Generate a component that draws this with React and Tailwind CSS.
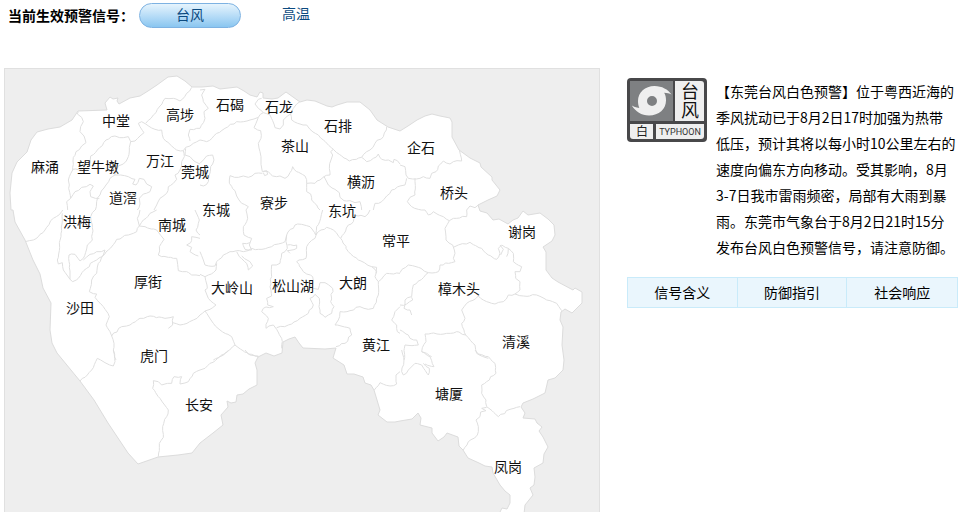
import React from "react";

const OUTLINE =
  "M11 210 L10 193 12 173 17 162 27 152 31 140 37 132 48 129 60 127 72 120 78 111 107 110 105 103 110 97 113 99 118 98 117 101 119 104 130 98 140 96 148 91 157 85 168 77 177 76 185 81 192 87 202 87 213 86 220 89 237 87 244 91 250 95 257 97 260 92 263 93 263 98 272 99 278 98 286 92 293 97 300 102 307 100 315 101 327 106 332 107 337 105 347 102 360 102 370 110 377 120 388 127 400 131 408 126 417 120 425 116 432 114 440 116 450 118 452 122 452 137 459 150 470 158 480 163 481 167 492 177 492 180 500 190 497 196 488 200 478 205 480 211 487 213 493 220 499 219 508 224 513 220 518 218 523 211 528 215 540 213 548 219 554 225 555 235 552 241 543 247 546 252 546 270 552 278 558 282 573 290 575 288 582 292 582 303 572 313 565 309 561 312 560 320 563 327 562 345 564 360 563 370 555 378 548 380 545 393 533 399 523 403 521 407 525 413 523 418 535 419 537 423 542 427 539 431 543 437 548 447 544 454 543 463 534 468 535 477 534 485 530 488 533 495 525 505 524 514 L499 514 502 508 507 509 510 503 510 495 505 491 500 485 493 473 492 467 485 466 479 463 468 458 463 450 459 446 458 437 447 433 444 437 438 441 432 433 432 428 420 425 421 418 418 413 412 419 400 421 395 422 387 422 378 415 380 410 374 390 371 385 365 383 363 377 354 374 347 374 344 365 333 358 336 348 325 349 303 348 299 343 295 337 289 339 283 342 282 353 274 356 266 353 258 357 255 363 257 370 257 385 249 389 243 394 237 395 236 402 231 403 227 401 228 407 221 415 223 425 213 433 200 443 192 453 178 455 158 457 138 464 128 453 108 423 94 400 80 381 57 353 52 343 50 330 51 303 43 288 40 274 33 260 25 240 15 222 13 210 Z";

// District borders, surveyed in sheets: each sheet has its own origin and is drawn at three times map scale.
const SHEETS = [
  {
    x: 0,
    y: 60,
    lines: [
      "235,155 232,162 245,172 250,185 242,200 240,215 252,228 258,248 245,258 228,275 220,292 218,330 208,350 206,385 212,415",
      "218,328 245,328",
      "212,415 225,395 245,382 270,373 280,378 270,395 272,410 298,415",
      "270,310 272,288 300,262 318,240 345,228 370,233 385,230 392,245 388,262 385,290 370,312 355,318 345,345 330,355 318,375 300,405 290,425 286,450",
      "392,245 405,243 420,228 432,218 420,200 415,190 425,185 437,192 465,208 485,210 490,235 530,270 550,272 557,262 580,250 600,240",
      "437,190 460,165 480,138 495,115 520,115 540,123 560,100 575,82",
      "600,205 570,208 565,225 570,243",
      "550,272 553,290 545,305 540,330 525,345 530,358 520,370 505,380 500,400 480,415 470,435 462,450",
      "345,345 362,345 385,350 405,358 398,372 408,375 418,355 432,358 440,372 455,380 450,395 430,402 418,415 420,432 412,450",
      "557,265 555,285 570,290 585,305 600,312",
      "212,415 200,425 203,450",
    ],
  },
  {
    x: 200,
    y: 60,
    lines: [
      "0,90 15,88 5,105 10,125 25,145 12,155 15,175 0,205",
      "0,240 20,245 50,220 75,205 110,185 150,180 175,172 190,158 175,145 165,132 175,118 185,115",
      "190,158 210,165 218,182 225,203 240,207 250,195 250,180 262,168 272,162 280,145 290,132 300,125",
      "272,162 275,180 300,192 320,195 330,208 355,225 370,240 400,268 425,288 448,303 485,292 510,270 525,250 550,230 560,200",
      "175,172 168,190 162,203 182,212 183,235 175,250 180,275 183,300 187,335 205,335 218,348 240,348 255,355 270,338 278,320 290,335 315,348 320,370 345,370 360,360 372,350 390,345 388,325 393,300 398,285 392,275 400,268",
      "187,340 165,340 145,352 130,348 115,352 90,347 88,370 105,392 110,408 125,430 145,440 138,450",
      "190,335 200,332 203,343 194,347 190,338",
      "320,370 320,395 332,402 335,420 350,435 360,450",
      "372,350 385,375 405,388 418,398 420,412 432,422 450,422 465,428 480,425 485,450",
      "485,292 500,305 520,295 535,282 545,298 565,300 580,308 582,298 592,302 600,312",
      "600,378 575,390 560,408 545,425 525,430 520,450",
      "0,310 10,300 20,288 38,285 42,300 32,320 28,345 25,365 10,378 0,375",
    ],
  },
  {
    x: 400,
    y: 60,
    lines: [
      "0,315 15,320 18,345 25,355 60,355 70,350 90,355 95,340 108,335 115,318 130,303 150,312 160,305 185,303 178,270",
      "0,378 15,375 20,355",
      "45,355 45,405 30,412 22,425 35,440 55,448 75,450",
      "200,450 210,438 225,443 235,435",
    ],
  },
  {
    x: 0,
    y: 210,
    lines: [
      "75,95 100,90 135,60 160,25 185,5 188,0",
      "187,10 183,80 172,150 175,162 187,158 190,180 210,208 218,215 235,205 260,175 280,155 305,140 325,120 350,88 385,75 410,65 418,48 435,50 470,60 492,88 478,110 475,135 485,140 530,145 535,182 560,185 575,195 600,197",
      "210,208 207,135 225,133 240,153 250,145 262,105 277,90 277,45 272,20 285,0",
      "418,48 412,25 420,0",
      "418,48 430,30 450,10 470,0",
      "250,150 270,133 290,125 315,120 310,135 295,160 290,190 275,210 268,245 290,252 285,262 310,290 328,320 318,345 330,365 335,378 365,350 390,345 420,325 450,318 495,325 520,320 518,345 505,355",
      "518,338 540,345 580,330 600,315",
      "335,378 342,400 340,420 348,450",
      "585,0 598,30 595,40 588,60 600,75",
      "600,85 575,80 572,98 560,105 575,112 570,125 595,138",
    ],
  },
  {
    x: 200,
    y: 210,
    lines: [
      "138,0 143,25 130,50 132,75 155,85 148,105 155,120 135,118 128,100 150,98",
      "0,125 10,150 15,165 45,168 50,155 70,135 90,125 110,122 130,125 155,115 175,118 215,110 255,95 260,75 285,45 305,43 330,50 347,75 355,65 380,52 400,60 422,85 445,125 475,150 515,170 530,185 525,200 535,215 560,190 600,190",
      "110,125 118,140 140,160 145,180 158,168 150,155 125,138",
      "50,160 48,180 25,195 15,200 0,193",
      "15,200 22,235 15,240 25,265 48,285 30,298 15,303 0,315",
      "15,303 40,340 60,360 95,380 105,405 150,435 175,440",
      "105,405 80,425 40,450",
      "260,75 258,95 262,115 255,125 245,130 240,160 215,165 215,200 210,230 215,258 200,265 203,285 220,290 190,295 185,305 205,325 198,355 220,345 230,358 245,385 245,415",
      "262,105 290,105 290,115 262,122 270,130",
      "230,353 265,345 300,325 325,310 340,285 330,265 345,253 358,265 360,310 375,322 395,310 402,290 392,275 398,235 375,218 360,218 355,238 338,235 338,200 310,185 290,155 318,145 320,110 345,85 350,70",
      "347,75 350,50 362,25 368,0",
      "422,85 445,45 460,35 465,15 495,20 510,0",
      "535,215 535,255 520,295 505,298 480,290 450,302 420,305 415,330 405,345 450,355 455,375 435,400 408,410",
      "600,290 585,305 575,330 590,345 592,365 600,370",
      "515,170 530,172 528,190",
    ],
  },
  {
    x: 400,
    y: 210,
    lines: [
      "75,0 85,15 100,5 130,20 148,32 160,25 200,20 200,0",
      "148,32 135,55 138,90 158,105 165,130 160,145 165,155 120,165 115,185 85,188 55,172 25,165 0,188",
      "85,188 40,225 35,260 15,270 12,295 30,300 35,315",
      "35,262 38,270 20,282 0,285",
      "160,112 175,105 210,97 245,115 265,135 290,148 300,130 295,115 305,105 325,115 320,140",
      "300,105 310,118 302,135",
      "325,115 340,130 340,155 365,170 360,185 345,185 347,205 360,215 360,240 345,252",
      "200,280 235,258 250,270 285,282 310,275 325,255 345,252 370,258 410,255 440,270 470,280 485,302",
      "200,280 185,300 195,325 185,340 197,375 170,365 140,370 75,372 78,395 65,425 80,430 95,440",
      "197,375 225,405 230,430 265,445",
      "0,360 25,375 30,385 50,390 55,405 15,405 12,450",
    ],
  },
  {
    x: 0,
    y: 350,
    lines: [
      "240,93 275,60 292,25 315,38 340,48 345,35 340,0",
      "475,320 478,280 490,262 488,230 500,200 505,180 480,145 458,115 460,92 475,95 485,105 515,100 522,80 545,80 540,102 565,95 580,70 600,60",
    ],
  },
  {
    x: 200,
    y: 350,
    lines: [
      "0,60 15,55 30,40 60,20 85,3",
      "135,0 145,12 175,18",
      "523,120 540,98 570,108 590,102 588,75 600,65",
    ],
  },
  {
    x: 400,
    y: 350,
    lines: [
      "225,0 235,12 265,20 285,40 288,70 245,105 245,130 258,150 260,170 295,200 330,178 360,170",
      "260,172 245,175 258,182 242,186 240,200 228,210 235,230 232,255 205,275 190,300",
      "5,0 12,30 5,65 10,75 25,60 45,40 65,45 85,75 88,55 70,40",
      "65,5 90,20 102,50 75,42",
    ],
  },
];

// Breaks long segments into short uneven steps so that the borders read as natural ones.
function roughen(line) {
  const pts = line.split(" ").map((p) => p.split(",").map(Number));
  let d = `M${pts[0][0]} ${pts[0][1]}`;
  let seed = 7;
  for (let i = 1; i < pts.length; i++) {
    const [ax, ay] = pts[i - 1];
    const [bx, by] = pts[i];
    const n = Math.floor(Math.hypot(bx - ax, by - ay) / 9);
    for (let k = 1; k < n; k++) {
      seed = (seed * 73 + 41) % 101;
      const dx = (seed % 5) - 2;
      const dy = ((seed * 3) % 5) - 2;
      d += ` L${Math.round(ax + ((bx - ax) * k) / n + dx)} ${Math.round(ay + ((by - ay) * k) / n + dy)}`;
    }
    d += ` L${bx} ${by}`;
  }
  return d;
}

const TOWNS = [
  ["中堂", 116, 121], ["高埗", 180, 115], ["石碣", 230, 105], ["石龙", 279, 107],
  ["石排", 338, 126], ["企石", 421, 148], ["麻涌", 45, 167], ["望牛墩", 98, 167],
  ["万江", 160, 161], ["莞城", 195, 172], ["茶山", 295, 146], ["横沥", 361, 182],
  ["桥头", 454, 193], ["道滘", 123, 198], ["洪梅", 77, 222], ["南城", 172, 225],
  ["东城", 216, 210], ["寮步", 274, 203], ["东坑", 342, 211], ["谢岗", 522, 232],
  ["常平", 396, 241], ["厚街", 148, 282], ["大岭山", 232, 288], ["松山湖", 293, 286],
  ["大朗", 353, 283], ["樟木头", 459, 289], ["沙田", 80, 308], ["虎门", 154, 356],
  ["黄江", 376, 345], ["清溪", 516, 342], ["长安", 199, 405], ["塘厦", 449, 394],
  ["凤岗", 508, 467],
];

function TownMap() {
  return (
    <svg viewBox="5 69 594 443" className="block w-full" role="img" aria-label="东莞市">
      <path d={OUTLINE} className="fill-white stroke-[#dcdcdc]" strokeLinejoin="round" />
      {SHEETS.map((s) => (
        <g
          key={`${s.x}-${s.y}`}
          transform={`translate(${s.x} ${s.y}) scale(0.33333)`}
          className="fill-none stroke-[#dfdfdf]"
          strokeWidth="3"
        >
          {s.lines.map((l) => (
            <path key={l} d={roughen(l)} />
          ))}
        </g>
      ))}
      {TOWNS.map(([name, x, y]) => (
        <text key={name} x={x} y={y + 5} textAnchor="middle" className="fill-[#111] text-[14px]">
          {name}
        </text>
      ))}
    </svg>
  );
}

function TyphoonSign() {
  return (
    <svg viewBox="0 0 80 64" className="block h-16 w-20 shrink-0" role="img" aria-label="台风 白 TYPHOON">
      <rect width="80" height="64" rx="4" fill="#48484a" />
      <rect x="3" y="3" width="43" height="40" fill="#7e8082" />
      <path d="M48 3h26a3 3 0 0 1 3 3v37H48z" fill="#efefef" />
      <path d="M3 46h23v15H6a3 3 0 0 1-3-3z" fill="#efefef" />
      <path d="M29 46h48v12a3 3 0 0 1-3 3H29z" fill="#efefef" />
      <path
        fill="#efefef"
        fillRule="evenodd"
        d="M44.500 16.500C41 11.500 35 8 27.500 8C18 8 11 14.500 11 23C11 26 11.600 28 12.300 30C9 29.500 6.500 28.500 4.800 27.500C8.500 33.500 14.500 37.500 22 37.500C32 37.500 39 31 39 22.500C39 19.500 38.500 17 37.200 14.800C40 14.800 42.500 15.500 44.500 16.500ZM25 18A5 5 0 1 0 25 28A5 5 0 1 0 25 18Z"
      />
      <text x="63" y="20" textAnchor="middle" fill="#111" className="text-[18px]">台</text>
      <text x="63" y="39" textAnchor="middle" fill="#111" className="text-[18px]">风</text>
      <text x="15" y="58" textAnchor="middle" fill="#222" className="text-[12px]">白</text>
      <text x="53" y="57" textAnchor="middle" fill="#333" className="font-[Roboto,sans-serif] text-[9px]">
        TYPHOON
      </text>
    </svg>
  );
}

export default function App() {
  return (
    <div className="bg-white pr-[5px] pl-1 font-['Noto_Sans_CJK_SC',sans-serif] text-[14px] text-black">
      <header className="flex h-[68px] items-start pt-[3px] pl-1">
        <h1 className="mr-[5px] leading-6 font-bold">当前生效预警信号：</h1>
        <nav className="flex gap-1">
          <button
            type="button"
            className="h-[25px] w-[102px] rounded-full border border-[#7db2e2] bg-linear-to-b from-[#e6f4fd] to-[#8ac6f0] pb-1 leading-[18px] text-[#0b4a80]"
          >
            台风
          </button>
          <button type="button" className="h-[25px] w-[102px] border border-transparent pb-2 leading-[18px] text-[#0b4a80]">
            高温
          </button>
        </nav>
      </header>
      <main className="grid grid-cols-[596fr_331fr] items-start gap-[27px]">
        <section className="overflow-hidden border border-b-0 border-[#e0e0e0] bg-[#eee]">
          <TownMap />
        </section>
        <aside className="pt-[10px]">
          <div className="flex gap-[9px]">
            <TyphoonSign />
            <p className="mr-[2px] min-w-0 flex-1 leading-[26px]">
              【东莞台风白色预警】位于粤西近海的季风扰动已于8月2日17时加强为热带低压，预计其将以每小时10公里左右的速度向偏东方向移动。受其影响，8月3-7日我市雷雨频密，局部有大雨到暴雨。东莞市气象台于8月2日21时15分发布台风白色预警信号，请注意防御。
            </p>
          </div>
          <div className="mt-[17px] grid grid-cols-3 divide-x divide-[#c9ebfa] border border-[#c9ebfa] bg-[#eaf6fd]">
            <button type="button" className="h-[29px]">信号含义</button>
            <button type="button" className="h-[29px]">防御指引</button>
            <button type="button" className="h-[29px]">社会响应</button>
          </div>
        </aside>
      </main>
    </div>
  );
}
